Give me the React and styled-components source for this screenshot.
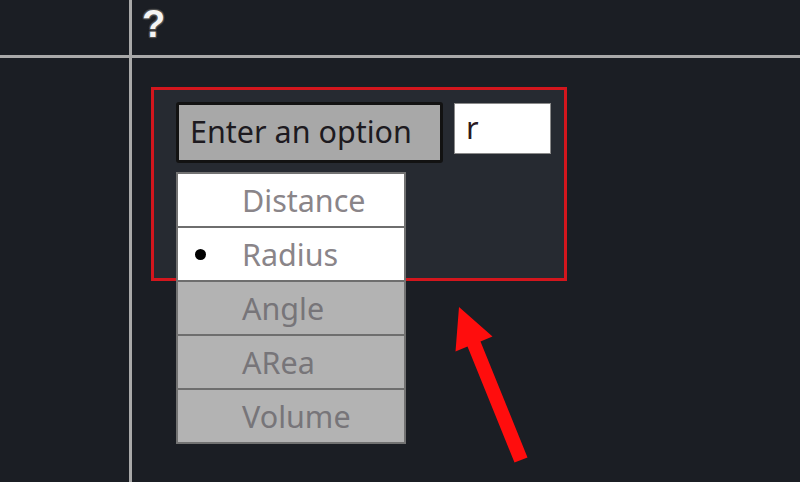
import React from 'react';
import styled, { createGlobalStyle } from 'styled-components';

const Global = createGlobalStyle`
  html, body {
    margin: 0;
    padding: 0;
    background: #1b1e24;
  }
  body {
    font-family: "Noto Sans", "Open Sans", sans-serif;
  }
`;

const Page = styled.div`
  position: relative;
  width: 800px;
  height: 482px;
  overflow: hidden;
  display: grid;
  grid-template-columns: 129px 3px 1fr;
  grid-template-rows: 55px 3px 1fr;
  background: #1b1e24;
`;

const Corner = styled.div`
  grid-column: 1;
  grid-row: 1;
`;

const VLine = styled.div`
  grid-column: 2;
  grid-row: 1 / 4;
  background: #a9a9a9;
`;

const HLine = styled.div`
  grid-column: 1 / 4;
  grid-row: 2;
  background: #a9a9a9;
`;

const HelpCell = styled.div`
  grid-column: 3;
  grid-row: 1;
  padding: 4px 0 0 10px;
  font-family: "Liberation Sans", sans-serif;
  font-weight: bold;
  font-size: 38px;
  line-height: 40px;
  color: #f4f4f4;
  text-shadow: 0 0 2px #444, 1px 1px 1px #555, -1px -1px 1px #555,
    1px -1px 1px #555, -1px 1px 1px #555;
`;

const Content = styled.div`
  grid-column: 3;
  grid-row: 3;
  padding: 29px 0 0 19px;
`;

const Panel = styled.div`
  box-sizing: border-box;
  width: 416px;
  height: 194px;
  border: 3px solid #d3161d;
  background: #262a31;
  padding: 12px 0 0 22px;
`;

const PromptRow = styled.div`
  display: flex;
  align-items: flex-start;
  gap: 11px;
`;

const PromptButton = styled.div`
  box-sizing: border-box;
  width: 267px;
  height: 61px;
  border: 3px solid #121212;
  border-radius: 3px;
  background: #a8a8a8;
  color: #1d1a20;
  font-size: 30.5px;
  line-height: 52px;
  padding-left: 11px;
  white-space: nowrap;
`;

const Entry = styled.div`
  box-sizing: border-box;
  margin-top: 1px;
  width: 97px;
  height: 51px;
  border: 1px solid #8a8a8a;
  background: #ffffff;
  color: #2a1a22;
  font-size: 30.5px;
  line-height: 46px;
  padding-left: 11px;
`;

const OptionList = styled.div`
  box-sizing: border-box;
  margin-top: 9px;
  width: 230px;
  border: 2px solid #727272;
  background: #6e6e6e;
  display: flex;
  flex-direction: column;
  gap: 2px;
`;

const Option = styled.div`
  position: relative;
  height: 52px;
  background: ${p => (p.$active ? '#ffffff' : '#b3b3b3')};
  color: ${p => (p.$active ? '#8a8589' : '#777579')};
  font-size: 30.5px;
  line-height: 52px;
  padding-left: 64px;
`;

const Bullet = styled.span`
  position: absolute;
  left: 17px;
  top: 21px;
  width: 11px;
  height: 11px;
  border-radius: 50%;
  background: #000;
`;

const Arrow = styled.svg`
  position: absolute;
  left: 0;
  top: 0;
  pointer-events: none;
`;

const options = [
  { label: 'Distance', active: true },
  { label: 'Radius', active: true, selected: true },
  { label: 'Angle' },
  { label: 'ARea' },
  { label: 'Volume' },
];

const App = () => (
  <>
    <Global />
    <Page>
      <Corner />
      <VLine />
      <HLine />
      <HelpCell>?</HelpCell>
      <Content>
        <Panel>
          <PromptRow>
            <PromptButton>Enter an option</PromptButton>
            <Entry>r</Entry>
          </PromptRow>
          <OptionList>
            {options.map(o => (
              <Option key={o.label} $active={o.active}>
                {o.selected && <Bullet />}
                {o.label}
              </Option>
            ))}
          </OptionList>
        </Panel>
      </Content>
      <Arrow width="800" height="482" viewBox="0 0 800 482">
        <polygon
          fill="#ff0d0d"
          points="459,307 492.5,336.5 480.5,341.4 527.5,457.4 514.5,462.6 467.5,346.6 455.5,351.5"
        />
      </Arrow>
    </Page>
  </>
);

export default App;
